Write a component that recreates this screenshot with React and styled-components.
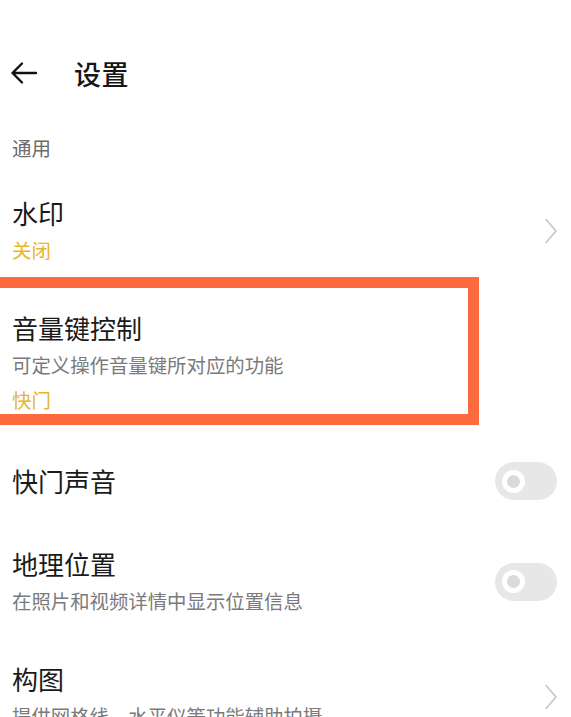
import React from "react";
import styled, { createGlobalStyle } from "styled-components";

const GlobalStyle = createGlobalStyle`
  html, body {
    margin: 0;
    padding: 0;
    background: #ffffff;
    font-family: "Noto Sans CJK SC", "Noto Sans", sans-serif;
    overflow: hidden;
  }
`;

const Page = styled.div`
  width: 571px;
  padding-top: 45px;
  box-sizing: border-box;
`;

const Header = styled.div`
  height: 56px;
  display: flex;
  align-items: center;
  padding-left: 10px;
  gap: 36px;
`;

const Title = styled.h1`
  margin: 0;
  font-size: 27px;
  font-weight: 500;
  color: #161616;
  letter-spacing: 0.5px;
`;

const SectionLabel = styled.div`
  padding: 32px 0 10px 12px;
  line-height: 30px;
  font-size: 19.5px;
  color: #6b6b6b;
`;

const Item = styled.div`
  position: relative;
  display: flex;
  align-items: center;
  justify-content: space-between;
  padding: 21px 14px 21px 12px;
  min-height: ${(p) => (p.single ? "86px" : "auto")};
  box-sizing: border-box;
`;

const Texts = styled.div`
  display: flex;
  flex-direction: column;
`;

const ItemTitle = styled.div`
  font-size: 26px;
  line-height: 38px;
  color: #1a1a1a;
`;

const Sub = styled.div`
  font-size: 19.4px;
  line-height: 35px;
  color: ${(p) => (p.accent ? "#e5b628" : "#7a7a7a")};
`;

const Highlight = styled.div`
  position: absolute;
  left: -20px;
  right: 92px;
  top: -11px;
  bottom: 13px;
  border: 11px solid #fd6a3e;
  pointer-events: none;
`;

const Toggle = styled.div`
  width: 62px;
  height: 38px;
  border-radius: 19px;
  background: #e7e7e7;
  display: flex;
  align-items: center;
  padding-left: 7px;
  box-sizing: border-box;
  flex-shrink: 0;
`;

const Knob = styled.div`
  width: 23px;
  height: 23px;
  border-radius: 50%;
  border: 5px solid #ffffff;
  background: #dadada;
  box-sizing: border-box;
`;

const BackArrow = () => (
  <svg width="28" height="24" viewBox="0 0 28 24" fill="none">
    <path
      d="M26 12H2.5M12 2.5L2.5 12L12 21.5"
      stroke="#111"
      strokeWidth="2.4"
      strokeLinecap="round"
      strokeLinejoin="round"
    />
  </svg>
);

const Chevron = () => (
  <svg width="12" height="26" viewBox="0 0 12 26" fill="none">
    <path
      d="M1 1.5L11 13L1 24.5"
      stroke="#c6c6c6"
      strokeWidth="1.6"
      strokeLinecap="round"
      strokeLinejoin="round"
    />
  </svg>
);

export default function App() {
  return (
    <>
      <GlobalStyle />
      <Page>
        <Header>
          <BackArrow />
          <Title>设置</Title>
        </Header>
        <SectionLabel>通用</SectionLabel>

        <Item>
          <Texts>
            <ItemTitle>水印</ItemTitle>
            <Sub accent>关闭</Sub>
          </Texts>
          <Chevron />
        </Item>

        <Item>
          <Texts>
            <ItemTitle>音量键控制</ItemTitle>
            <Sub>可定义操作音量键所对应的功能</Sub>
            <Sub accent>快门</Sub>
          </Texts>
          <Highlight />
        </Item>

        <Item single>
          <Texts>
            <ItemTitle>快门声音</ItemTitle>
          </Texts>
          <Toggle>
            <Knob />
          </Toggle>
        </Item>

        <Item>
          <Texts>
            <ItemTitle>地理位置</ItemTitle>
            <Sub>在照片和视频详情中显示位置信息</Sub>
          </Texts>
          <Toggle>
            <Knob />
          </Toggle>
        </Item>

        <Item>
          <Texts>
            <ItemTitle>构图</ItemTitle>
            <Sub>提供网格线、水平仪等功能辅助拍摄</Sub>
          </Texts>
          <Chevron />
        </Item>
      </Page>
    </>
  );
}
